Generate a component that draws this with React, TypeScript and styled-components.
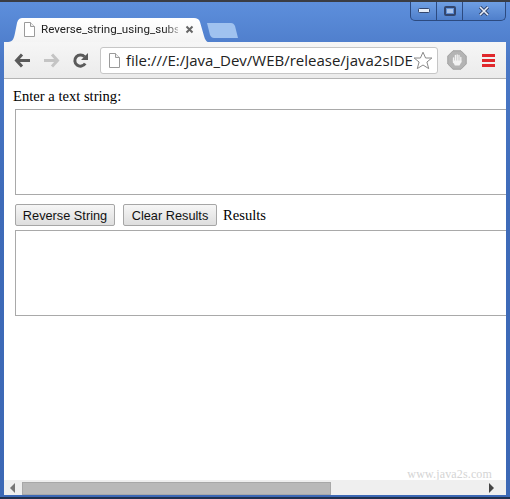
import styled, { createGlobalStyle } from 'styled-components';

const GlobalStyle = createGlobalStyle`
  html, body {
    margin: 0;
    padding: 0;
    height: 100%;
    overflow: hidden;
    background: #2a2f3a;
  }
  #root {
    height: 100%;
  }
`;

function FileIcon() {
  return (
    <FileGlyph width="12" height="15" viewBox="0 0 12 15">
      <path d="M1.5 .5H7.5L11.5 4.5V14.5H1.5Z" fill="#fff" stroke="#9a9a9a" />
      <path d="M7.5 .5V4.5H11.5" fill="#eee" stroke="#9a9a9a" />
    </FileGlyph>
  );
}

function App() {
  return (
    <Window>
      <GlobalStyle />
      <TitleBar>
        <Tab>
          <FileIcon />
          <TabTitle>Reverse_string_using_subs</TabTitle>
          <TabClose>
            <svg width="9" height="9" viewBox="0 0 9 9">
              <path d="M1.5 1.5L7.5 7.5M7.5 1.5L1.5 7.5" stroke="#666" strokeWidth="2" />
            </svg>
          </TabClose>
        </Tab>
        <NewTab />
        <WindowControls>
          <ControlButton $width={25}>
            <svg width="12" height="6" viewBox="0 0 12 6">
              <rect x=".5" y=".5" width="11" height="4" rx="1" fill="#e4ecf8" stroke="#33466e" />
            </svg>
          </ControlButton>
          <ControlButton $width={25}>
            <svg width="12" height="10" viewBox="0 0 12 10">
              <rect x="1" y="1" width="10" height="8" rx="1" fill="none" stroke="#33466e" strokeWidth="2" />
              <rect x="3" y="3" width="6" height="4" fill="#a9c3ea" />
            </svg>
          </ControlButton>
          <ControlButton $width={42}>
            <svg width="12" height="10" viewBox="0 0 12 10">
              <path d="M2 1L10 9M10 1L2 9" stroke="#33466e" strokeWidth="3.4" />
              <path d="M2 1L10 9M10 1L2 9" stroke="#e8eef8" strokeWidth="1.6" />
            </svg>
          </ControlButton>
        </WindowControls>
      </TitleBar>

      <Toolbar>
        <NavButton>
          <svg width="17" height="15" viewBox="0 0 17 15">
            <path d="M8 1.5L2.5 7.5L8 13.5M3 7.5H16" fill="none" stroke="#5a5a5a" strokeWidth="3" />
          </svg>
        </NavButton>
        <NavButton>
          <svg width="17" height="15" viewBox="0 0 17 15">
            <path d="M9 1.5L14.5 7.5L9 13.5M14 7.5H1" fill="none" stroke="#c4c4c4" strokeWidth="3" />
          </svg>
        </NavButton>
        <NavButton>
          <svg width="17" height="17" viewBox="0 0 17 17">
            <path d="M13.2 11.5A5.6 5.6 0 1 1 12.6 4.8" fill="none" stroke="#5a5a5a" strokeWidth="3" />
            <path d="M16 1V8H9Z" fill="#5a5a5a" />
          </svg>
        </NavButton>
        <AddressBar>
          <FileIcon />
          <AddressText>file:///E:/Java_Dev/WEB/release/java2sIDE</AddressText>
          <svg width="20" height="19" viewBox="0 0 20 19">
            <path
              d="M10 1.2L12.6 7H18.9L13.9 11L15.7 17.6L10 14L4.3 17.6L6.1 11L1.1 7H7.4Z"
              fill="#fff"
              stroke="#8a8a8a"
            />
          </svg>
        </AddressBar>
        <StopIcon>
          <svg width="20" height="20" viewBox="0 0 20 20">
            <path d="M6 .8H14L19.2 6V14L14 19.2H6L.8 14V6Z" fill="#b4b4b4" stroke="#a0a0a0" />
            <path d="M6.5 12.5V8M8.4 11V5.5M10.2 11V4.8M12 11V5.5M13.8 12V7.5" stroke="#f2f2f2" strokeWidth="1.3" strokeLinecap="round" />
            <path d="M5.8 11L7.8 15.5H12.5L14.4 12V10.5H5.8Z" fill="#f2f2f2" />
          </svg>
        </StopIcon>
        <MenuIcon>
          <MenuBar />
          <MenuBar />
          <MenuBar />
        </MenuIcon>
      </Toolbar>

      <Page>
        <Label>Enter a text string:</Label>
        <TextBox />
        <ButtonRow>
          <PageButton $width={100}>Reverse String</PageButton>
          <PageButton $width={94}>Clear Results</PageButton>
          <RowLabel>Results</RowLabel>
        </ButtonRow>
        <TextBox />
        <Watermark>www.java2s.com</Watermark>
      </Page>

      <ScrollBar>
        <ScrollArrow>
          <svg width="6" height="10" viewBox="0 0 6 10">
            <path d="M5 0V10L0 5Z" fill="#777" />
          </svg>
        </ScrollArrow>
        <ScrollTrack>
          <ScrollThumb />
        </ScrollTrack>
        <ScrollArrow $end>
          <svg width="6" height="10" viewBox="0 0 6 10">
            <path d="M1 0V10L6 5Z" fill="#444" />
          </svg>
        </ScrollArrow>
      </ScrollBar>
    </Window>
  );
}

const FileGlyph = styled.svg`
  flex-shrink: 0;
`;

const Window = styled.div`
  height: 499px;
  width: 510px;
  box-sizing: border-box;
  padding: 0 4px 2px 4px;
  display: flex;
  flex-direction: column;
  background: linear-gradient(180deg, #5d8fdc 0%, #4a78c6 12%, #3e6bb9 40%, #3c68b5 100%);
  border-top: 2px solid #3a3d44;
  border-bottom: 2px solid #20304e;
  overflow: hidden;
`;

const TitleBar = styled.div`
  height: 40px;
  flex-shrink: 0;
  display: flex;
  align-items: flex-end;
`;

const Tab = styled.div`
  width: 200px;
  height: 24px;
  margin-left: 4px;
  box-sizing: border-box;
  padding: 0 14px 2px 15px;
  display: flex;
  align-items: center;
  background: linear-gradient(180deg, #ffffff 0%, #f4f4f4 100%);
  clip-path: path('M0 24C5 24 6 20 7 15L9 5C10 1 12 0 15 0H186C189 0 191 1 192 4L196 18C197 22 199 24 200 24Z');
`;

const TabTitle = styled.span`
  width: 137px;
  flex-shrink: 0;
  margin-left: 6px;
  white-space: nowrap;
  font-family: Roboto, sans-serif;
  font-size: 11.6px;
  color: #222;
  mask-image: linear-gradient(90deg, #000 90%, rgba(0, 0, 0, 0.35) 100%);
`;

const TabClose = styled.span`
  margin-left: 7px;
  display: flex;
`;

const NewTab = styled.div`
  width: 31px;
  height: 15px;
  margin-left: -1px;
  margin-bottom: 4px;
  background: #a0c2ef;
  clip-path: path('M0 0H24C26 0 27 1 28 3L31 15H7C5 15 4 14 3 12Z');
`;

const WindowControls = styled.div`
  align-self: flex-start;
  margin-left: auto;
  margin-right: 0;
  height: 18px;
  display: flex;
  border: 1px solid #2c4a80;
  border-top: none;
  border-radius: 0 0 5px 5px;
  overflow: hidden;
  background: linear-gradient(180deg, #6f9fe3 0%, #4f7fcb 100%);
`;

const ControlButton = styled.div<{ $width: number }>`
  width: ${(p) => p.$width}px;
  display: flex;
  align-items: center;
  justify-content: center;
  border-left: 1px solid #2c4a80;
  &:first-child {
    border-left: none;
  }
`;

const Toolbar = styled.div`
  height: 37px;
  flex-shrink: 0;
  box-sizing: border-box;
  padding: 4px 10px 4px 2px;
  display: flex;
  align-items: center;
  background: linear-gradient(180deg, #f6f6f6 0%, #ebebeb 100%);
  border-bottom: 1px solid #b4b4b4;
`;

const NavButton = styled.div`
  width: 29px;
  flex-shrink: 0;
  display: flex;
  justify-content: center;
  margin-left: 0;
  &:first-child {
    margin-left: 2px;
  }
`;

const AddressBar = styled.div`
  width: 338px;
  height: 27px;
  flex-shrink: 0;
  margin-left: 5px;
  box-sizing: border-box;
  padding: 0 3px 0 7px;
  display: flex;
  align-items: center;
  background: #fff;
  border: 1px solid #c6c6c6;
  border-radius: 3px;
`;

const AddressText = styled.span`
  width: 287px;
  flex-shrink: 0;
  margin-left: 6px;
  white-space: nowrap;
  font-family: "Open Sans", sans-serif;
  font-size: 15px;
  color: #222;
`;

const StopIcon = styled.div`
  margin-left: 9px;
  flex-shrink: 0;
  display: flex;
`;

const MenuIcon = styled.div`
  margin-left: 15px;
  width: 13px;
  flex-shrink: 0;
  display: flex;
  flex-direction: column;
  gap: 2px;
`;

const MenuBar = styled.span`
  height: 3px;
  background: #e0282c;
`;

const Page = styled.div`
  position: relative;
  flex: 1;
  min-height: 0;
  box-sizing: border-box;
  padding: 8px 0 0 9px;
  background: #fff;
  overflow: hidden;
  font-family: "Liberation Serif", serif;
  font-size: 14.6px;
  color: #000;
`;

const Label = styled.div`
  height: 22px;
  line-height: 18px;
`;

const TextBox = styled.div`
  width: 640px;
  height: 86px;
  margin-left: 2px;
  box-sizing: border-box;
  border: 1px solid #a9a9a9;
  background: #fff;
`;

const ButtonRow = styled.div`
  height: 35px;
  margin-left: 2px;
  box-sizing: border-box;
  padding-bottom: 4px;
  display: flex;
  align-items: flex-end;
  gap: 8px;
`;

const PageButton = styled.button<{ $width: number }>`
  width: ${(p) => p.$width}px;
  height: 22px;
  margin: 0;
  padding: 0;
  box-sizing: border-box;
  border: 1px solid #a6a6a6;
  border-radius: 2px;
  background: linear-gradient(180deg, #f6f6f6 0%, #dedede 100%);
  font-family: "Liberation Sans", sans-serif;
  font-size: 12.75px;
  color: #111;
`;

const RowLabel = styled.span`
  margin-left: -2px;
  line-height: 22px;
`;

const Watermark = styled.span`
  position: absolute;
  right: 14px;
  bottom: 0;
  line-height: 12px;
  font-family: "Liberation Serif", serif;
  font-size: 12px;
  letter-spacing: 0.15px;
  color: #d4d4d4;
`;

const ScrollBar = styled.div`
  height: 15px;
  flex-shrink: 0;
  display: flex;
  align-items: center;
  background: #efefef;
`;

const ScrollArrow = styled.div<{ $end?: boolean }>`
  width: 18px;
  flex-shrink: 0;
  display: flex;
  justify-content: ${(p) => (p.$end ? 'flex-start' : 'center')};
`;

const ScrollTrack = styled.div`
  flex: 1;
  height: 15px;
  display: flex;
  align-items: flex-end;
`;

const ScrollThumb = styled.div`
  width: 309px;
  height: 13px;
  box-sizing: border-box;
  background: #b9b9b9;
  border: 1px solid #a8a8a8;
`;

export default App;
